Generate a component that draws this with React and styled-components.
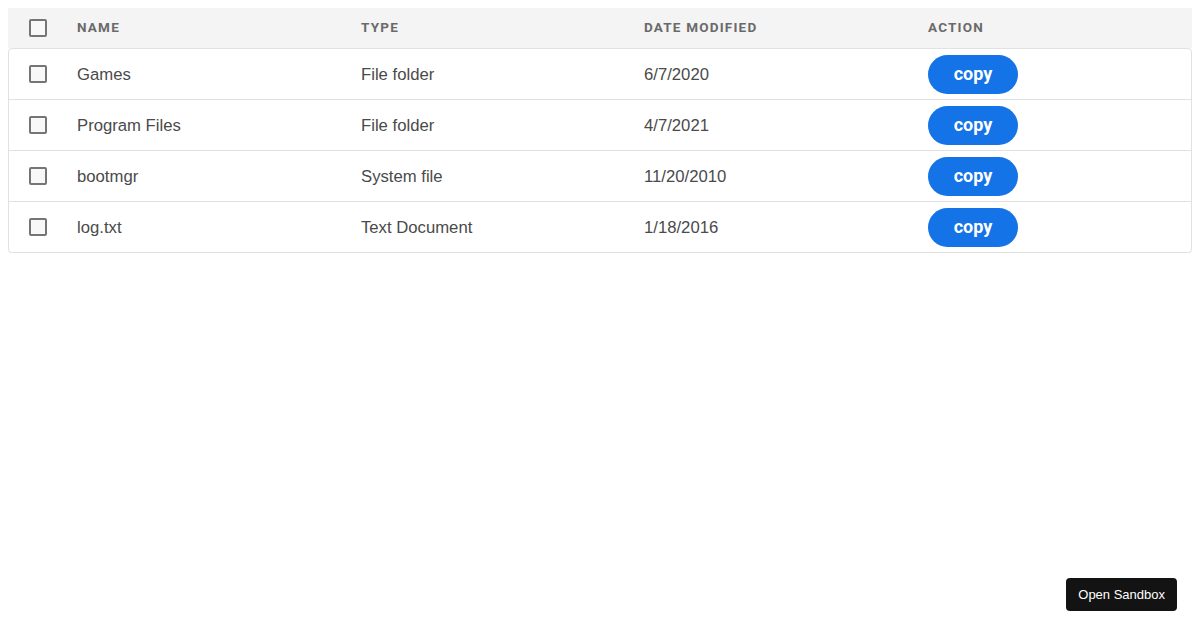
import React from "react";
import styled, { createGlobalStyle } from "styled-components";

const GlobalStyle = createGlobalStyle`
  body {
    margin: 8px;
    background: #ffffff;
    font-family: Roboto, "Liberation Sans", sans-serif;
  }
`;

const Table = styled.div`
  width: 100%;
`;

const HeadRow = styled.div`
  display: grid;
  grid-template-columns: 53px 284px 283px 284px 1fr;
  align-items: center;
  height: 40px;
  background: #f4f4f4;
`;

const HeadCell = styled.div`
  padding: 0 16px 2px;
  font-size: 13.5px;
  font-weight: 700;
  letter-spacing: 1.2px;
  text-transform: uppercase;
  color: #6a6a6a;
`;

const Body = styled.div`
  border: 1px solid #e1e1e1;
  border-radius: 4px;
  box-shadow: 0 1px 2px rgba(0, 0, 0, 0.08);
`;

const Row = styled.div`
  display: grid;
  grid-template-columns: 52px 284px 283px 284px 1fr;
  align-items: center;
  height: 50px;
  border-top: ${(p) => (p.first ? "none" : "1px solid #e1e1e1")};
`;

const CheckCell = styled.div`
  display: flex;
  justify-content: flex-end;
  padding-right: 14px;
`;

const Check = styled.span`
  width: 14px;
  height: 14px;
  border: 2px solid #757575;
  border-radius: 2px;
  background: #f8f8f8;
`;

const Cell = styled.div`
  padding: 1px 16px 0;
  font-family: "Liberation Sans", Arial, sans-serif;
  font-size: 16.7px;
  color: #4a4a4a;
`;

const CopyButton = styled.button`
  width: 90px;
  height: 39px;
  padding: 0 0 3px;
  border: none;
  border-radius: 20px;
  background: #1473e6;
  color: #ffffff;
  font-family: Roboto, "Liberation Sans", sans-serif;
  font-size: 18px;
  font-weight: 700;
  cursor: pointer;
`;

const Sandbox = styled.a`
  position: fixed;
  right: 23px;
  bottom: 19px;
  padding: 0 12px;
  height: 33px;
  display: flex;
  align-items: center;
  background: #131313;
  color: #ffffff;
  border-radius: 4px;
  font-family: "Liberation Sans", Arial, sans-serif;
  font-size: 13px;
  text-decoration: none;
`;

const files = [
  { name: "Games", type: "File folder", date: "6/7/2020" },
  { name: "Program Files", type: "File folder", date: "4/7/2021" },
  { name: "bootmgr", type: "System file", date: "11/20/2010" },
  { name: "log.txt", type: "Text Document", date: "1/18/2016" },
];

export default function App() {
  return (
    <>
      <GlobalStyle />
      <Table>
        <HeadRow>
          <CheckCell><Check /></CheckCell>
          <HeadCell>Name</HeadCell>
          <HeadCell>Type</HeadCell>
          <HeadCell>Date Modified</HeadCell>
          <HeadCell>Action</HeadCell>
        </HeadRow>
        <Body>
          {files.map((f, i) => (
            <Row key={f.name} first={i === 0}>
              <CheckCell><Check /></CheckCell>
              <Cell>{f.name}</Cell>
              <Cell>{f.type}</Cell>
              <Cell>{f.date}</Cell>
              <Cell><CopyButton>copy</CopyButton></Cell>
            </Row>
          ))}
        </Body>
      </Table>
      <Sandbox href="#">Open Sandbox</Sandbox>
    </>
  );
}
